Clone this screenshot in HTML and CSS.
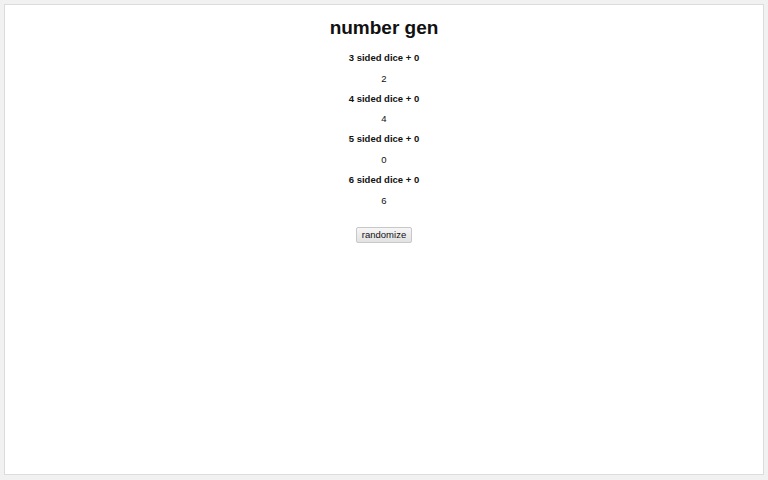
FILE: index.html
```html
<!DOCTYPE html>
<html lang="en">
<head>
  <meta charset="UTF-8" />
  <title>number gen</title>
  <link rel="stylesheet" href="styles.css">
</head>
<body>
  <div class="page">
    <h1>number gen</h1>

    <div class="dice">
      <div class="label">3 sided dice + 0</div>
      <div class="value">2</div>
      <div class="label">4 sided dice + 0</div>
      <div class="value">4</div>
      <div class="label">5 sided dice + 0</div>
      <div class="value">0</div>
      <div class="label">6 sided dice + 0</div>
      <div class="value">6</div>
    </div>

    <button type="button">randomize</button>
  </div>
</body>
</html>
```

FILE: styles.css
```css
body {
  margin: 0;
  padding: 4px;
  background-color: #f1f1f1;
  font-family: "Liberation Sans", Arial, sans-serif;
  color: #111;
}
.page {
  background-color: #fff;
  border: 1px solid #dcdcdc;
  height: 469px;
  display: flex;
  flex-direction: column;
  align-items: center;
}
h1 {
  margin: 12px 0 0;
  font-size: 19px;
  line-height: 22px;
}
.dice {
  margin-top: 9px;
  display: flex;
  flex-direction: column;
  align-items: center;
}
.label {
  font-weight: bold;
  font-size: 9.5px;
  line-height: 20.5px;
}
.value {
  font-size: 9.5px;
  line-height: 20.2px;
}
button {
  margin-top: 16px;
  padding: 1px 5px;
  font-family: "Liberation Sans", Arial, sans-serif;
  font-size: 9.5px;
  color: #111;
  background: linear-gradient(#f6f6f6, #e2e2e2);
  border: 1px solid #c8c8c8;
  border-radius: 2px;
  height: 16px;
}
```
